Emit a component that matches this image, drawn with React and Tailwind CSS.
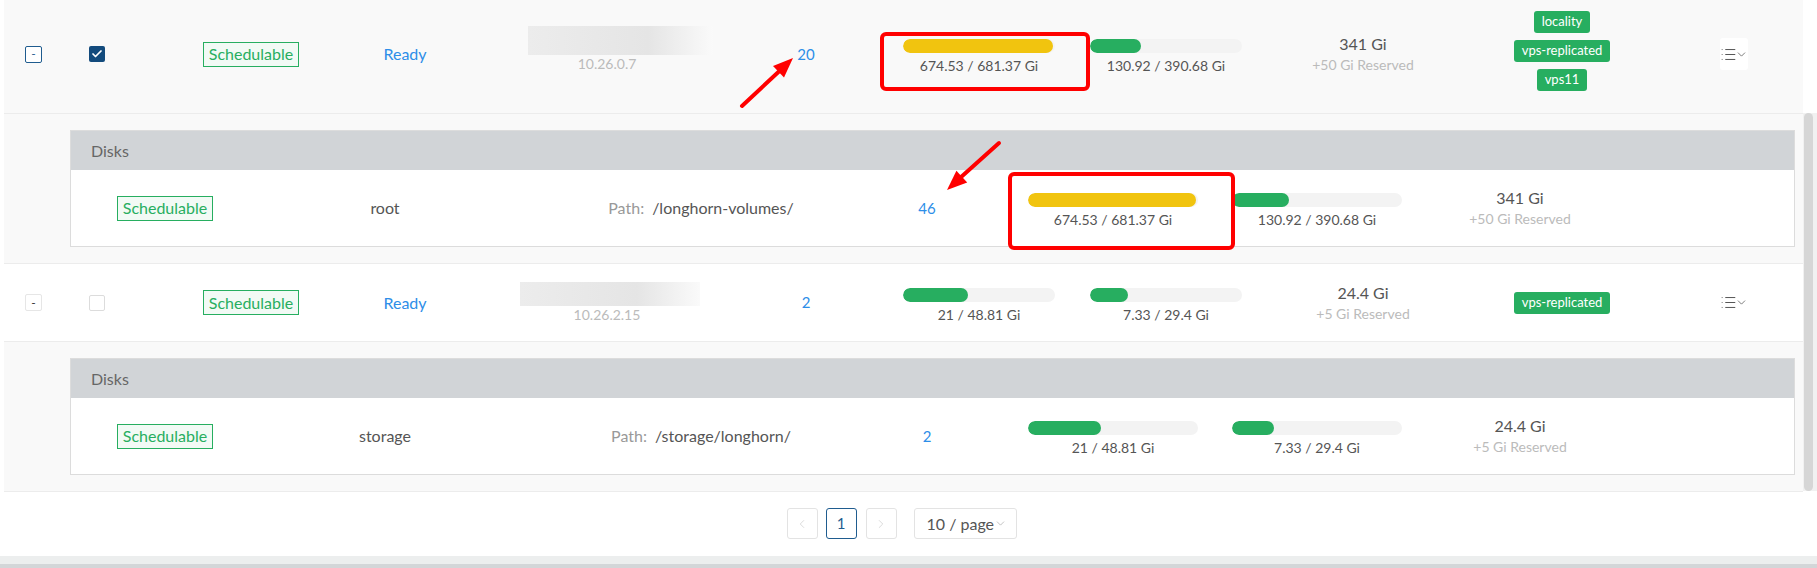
import { List, ChevronDown, ChevronLeft, ChevronRight, Check } from "lucide-react";

function StatusTag() {
  return (
    <span className="inline-flex h-[25px] items-center border border-[#27ae60] bg-[#f2faf5] px-[5px] text-[16px] text-[#27ae60]">
      Schedulable
    </span>
  );
}

function Usage({ used, total, fill, track }) {
  const pct = (parseFloat(used) / parseFloat(total)) * 100;
  return (
    <div className="mt-[6px] flex flex-col items-center">
      <div className={`${track} h-[14px] overflow-hidden rounded-full bg-[#f3f3f3]`}>
        <div className={`${fill} h-full rounded-full`} style={{ width: `${pct}%` }} />
      </div>
      <div className="mt-[4px] text-[14px] leading-[18px] whitespace-nowrap text-[#555]">
        {used} / {total} Gi
      </div>
    </div>
  );
}

function Size({ size, reserved }) {
  return (
    <div className="flex flex-col items-center">
      <div className="text-[16px] leading-[22px] text-[#555]">{size}</div>
      <div className="text-[14px] leading-[20px] text-[#bbb]">{reserved}</div>
    </div>
  );
}

function NodeRow({ active, nameBox, nameShift, ip, replicas, bar1, bar2, size, reserved, tags, tagShift }) {
  return (
    <div
      className={
        active
          ? "flex h-[114px] items-center border-b border-[#ececec] bg-[#f9f9f9] pb-[5px]"
          : "flex h-[78px] items-center border-b border-[#ececec] bg-white"
      }
    >
      <div className="flex w-[59px] justify-center">
        {active ? (
          <span className="flex h-[17px] w-[17px] items-center justify-center rounded-[2px] border border-[#1f5c8f] bg-white text-[12px] leading-none text-[#1f5c8f]">
            -
          </span>
        ) : (
          <span className="flex h-[17px] w-[17px] items-center justify-center rounded-[2px] border border-[#e6e6e6] bg-white text-[12px] leading-none text-[#333]">
            -
          </span>
        )}
      </div>
      <div className="flex w-[68px] justify-center">
        {active ? (
          <span className="flex h-[16px] w-[16px] items-center justify-center rounded-[2px] bg-[#134b7d]">
            <Check size={12} strokeWidth={3.5} color="#fff" />
          </span>
        ) : (
          <span className="h-[16px] w-[16px] rounded-[2px] border border-[#dcdcdc] bg-white" />
        )}
      </div>
      <div className="flex w-[240px] justify-center">
        <StatusTag />
      </div>
      <div className="flex w-[68px] justify-center text-[16px] text-[#2d8ee8]">Ready</div>
      <div className={`${nameShift} flex w-[336px] flex-col items-center`}>
        <div className={`${nameBox} bg-linear-to-r from-[#ececec] via-[#e5e5e5] via-65% to-[#fafafa]`} />
        <div className="text-[14px] leading-[18px] text-[#bbb]">{ip}</div>
      </div>
      <div className="flex w-[62px] justify-center text-[15px] text-[#2d8ee8]">{replicas}</div>
      <div className="ml-[55px] flex w-[174px] justify-center">{bar1}</div>
      <div className="flex w-[200px] justify-center">{bar2}</div>
      <div className="flex w-[194px] justify-center">
        <Size size={size} reserved={reserved} />
      </div>
      <div className={`${tagShift} flex w-[204px] flex-col items-center gap-[7px]`}>
        {tags.map((t) => (
          <span
            key={t}
            className="flex h-[22px] items-center rounded-[3px] bg-[#27ae60] px-[8px] text-[13px] text-white"
          >
            {t}
          </span>
        ))}
      </div>
      <div className="flex w-[139px] justify-center">
        <span
          className={
            active
              ? "flex h-[32px] w-[28px] items-center justify-center rounded-[3px] bg-white text-[#555]"
              : "flex h-[24px] w-[28px] items-center justify-center text-[#555]"
          }
        >
          <List size={17} strokeWidth={1.4} />
          <ChevronDown size={13} strokeWidth={1.4} className="-ml-[2px]" />
        </span>
      </div>
    </div>
  );
}

function DiskPanel({ name, path, replicas, bar1, bar2, size, reserved }) {
  return (
    <div className="border-b border-[#ececec] bg-[#f9f9f9] px-[66px] pt-[16px] pb-[16px] pr-[8px]">
      <div className="border border-[#dcdcdc] bg-white">
        <div className="flex h-[39px] items-center bg-[#d1d4d7] pl-[20px] text-[16px] text-[#666]">Disks</div>
        <div className="flex h-[76px] items-center">
          <div className="flex w-[188px] justify-center">
            <StatusTag />
          </div>
          <div className="flex w-[252px] justify-center text-[16px] text-[#555]">{name}</div>
          <div className="flex w-[380px] justify-center text-[16px] whitespace-nowrap">
            <span className="text-[#999]">Path:</span>
            <span className="ml-[8px] text-[#555]">{path}</span>
          </div>
          <div className="flex w-[72px] justify-center text-[15px] text-[#2d8ee8]">{replicas}</div>
          <div className="ml-[50px] flex w-[200px] justify-center">{bar1}</div>
          <div className="flex w-[208px] justify-center">{bar2}</div>
          <div className="flex w-[198px] justify-center">
            <Size size={size} reserved={reserved} />
          </div>
        </div>
      </div>
    </div>
  );
}

export default function App() {
  return (
    <div className="relative h-[568px] w-[1817px] overflow-hidden bg-white font-[Lato,'Noto_Sans',sans-serif]">
      <div className="flex h-[491px]">
        <div className="w-[4px]" />
        <div className="w-[1799px]">
          <NodeRow
            active
            nameBox="h-[29px] w-[185px] ml-[26px]"
            nameShift="mb-[9px]"
            ip="10.26.0.7"
            replicas="20"
            bar1={<Usage used="674.53" total="681.37" fill="bg-[#f1c40f]" track="w-[152px]" />}
            bar2={<Usage used="130.92" total="390.68" fill="bg-[#27ae60]" track="w-[152px]" />}
            size="341 Gi"
            reserved="+50 Gi Reserved"
            tags={["locality", "vps-replicated", "vps11"]}
            tagShift="mb-[6px]"
          />
          <DiskPanel
            name="root"
            path="/longhorn-volumes/"
            replicas="46"
            bar1={<Usage used="674.53" total="681.37" fill="bg-[#f1c40f]" track="w-[170px]" />}
            bar2={<Usage used="130.92" total="390.68" fill="bg-[#27ae60]" track="w-[170px]" />}
            size="341 Gi"
            reserved="+50 Gi Reserved"
          />
          <NodeRow
            nameBox="h-[24px] w-[180px] ml-[6px]"
            nameShift=""
            ip="10.26.2.15"
            replicas="2"
            bar1={<Usage used="21" total="48.81" fill="bg-[#27ae60]" track="w-[152px]" />}
            bar2={<Usage used="7.33" total="29.4" fill="bg-[#27ae60]" track="w-[152px]" />}
            size="24.4 Gi"
            reserved="+5 Gi Reserved"
            tags={["vps-replicated"]}
            tagShift=""
          />
          <DiskPanel
            name="storage"
            path="/storage/longhorn/"
            replicas="2"
            bar1={<Usage used="21" total="48.81" fill="bg-[#27ae60]" track="w-[170px]" />}
            bar2={<Usage used="7.33" total="29.4" fill="bg-[#27ae60]" track="w-[170px]" />}
            size="24.4 Gi"
            reserved="+5 Gi Reserved"
          />
        </div>
        <div className="flex w-[14px] flex-col">
          <div className="h-[113px]" />
          <div className="flex-1 bg-[#f1f1f1] px-[1px]">
            <div className="h-full w-[9px] rounded-full bg-[#d6d6d6]" />
          </div>
        </div>
      </div>

      <div className="flex h-[65px] items-center justify-center pr-[14px]">
        <span className="flex h-[31px] w-[31px] items-center justify-center rounded-[3px] border border-[#e3e3e3] text-[#ccc]">
          <ChevronLeft size={14} strokeWidth={1.2} />
        </span>
        <span className="ml-[8px] flex h-[31px] w-[31px] items-center justify-center rounded-[3px] border border-[#1f5c8f] text-[15px] text-[#1f5c8f]">
          1
        </span>
        <span className="ml-[9px] flex h-[31px] w-[31px] items-center justify-center rounded-[3px] border border-[#e3e3e3] text-[#ccc]">
          <ChevronRight size={14} strokeWidth={1.2} />
        </span>
        <span className="ml-[17px] flex h-[31px] w-[103px] items-center rounded-[3px] border border-[#e3e3e3] pl-[12px] text-[16px] text-[#555]">
          <span>10 / page</span>
          <ChevronDown size={13} strokeWidth={1.3} className="shrink-0 text-[#aaa]" />
        </span>
      </div>
      <div className="h-[8px] bg-[#eceeee]" />
      <div className="h-[4px] bg-[#d3d6d8]" />

      <div className="absolute top-[32px] left-[880px] h-[59px] w-[210px] rounded-[6px] border-[4px] border-[#ff0000]" />
      <div className="absolute top-[172px] left-[1008px] h-[78px] w-[227px] rounded-[6px] border-[4px] border-[#ff0000]" />
      <svg className="pointer-events-none absolute inset-0" width="1817" height="568">
        <line x1="742" y1="106" x2="780" y2="70.5" stroke="#ff0000" strokeWidth="4" strokeLinecap="round" />
        <polygon points="793,58 784,77.5 773,65.9" fill="#ff0000" />
        <line x1="999" y1="143" x2="960" y2="178" stroke="#ff0000" strokeWidth="4" strokeLinecap="round" />
        <polygon points="947,190 967.2,182.5 956.4,170.7" fill="#ff0000" />
      </svg>
    </div>
  );
}
